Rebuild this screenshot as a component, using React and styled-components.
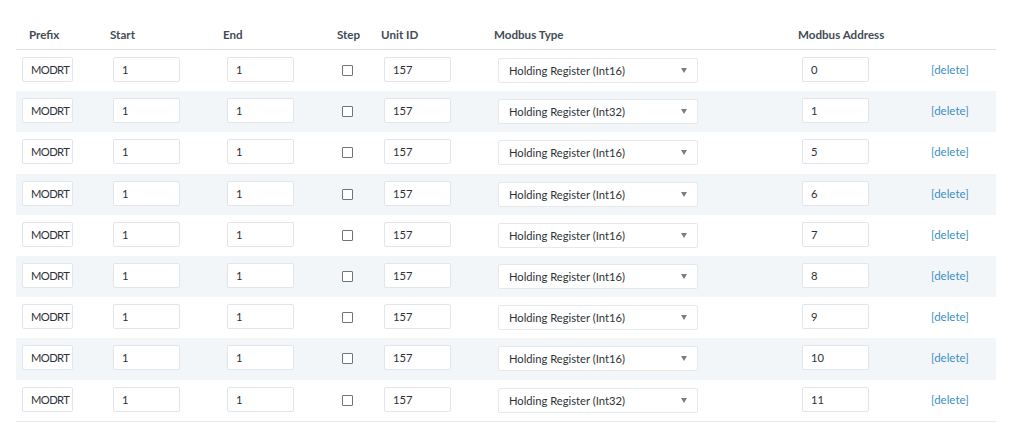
import React from "react";
import styled, { createGlobalStyle } from "styled-components";

const Global = createGlobalStyle`
  html, body { margin: 0; padding: 0; background: #fff; }
  body { font-family: "Lato", "Liberation Sans", sans-serif; }
  * { box-sizing: border-box; }
`;

const COLS = "90px 114px 114px 43px 114px 304px 129px 72px";

const Table = styled.div`
  width: 980px;
  margin-left: 16px;
  border-bottom: 1px solid #e6e9ed;
`;

const HeadRow = styled.div`
  display: grid;
  grid-template-columns: ${COLS};
  height: 50px;
  align-items: end;
  border-bottom: 1px solid #dde1e6;
  padding-bottom: 7px;
`;

const Th = styled.div`
  padding-left: ${(p) => p.$pl ?? 3}px;
  font-size: 11.6px;
  line-height: 15px;
  font-weight: 700;
  color: #434b56;
  white-space: nowrap;
`;

const Row = styled.div`
  display: grid;
  grid-template-columns: ${COLS};
  height: 41.2px;
  align-items: center;
  background: ${(p) => (p.$shaded ? "#f3f6f9" : "#fff")};
`;

const Td = styled.div`
  padding-left: ${(p) => p.$pl ?? 7}px;
  display: flex;
  align-items: center;
  padding-bottom: 2px;
`;

const Input = styled.div`
  width: ${(p) => p.$w}px;
  height: 25px;
  border: 1px solid #e2e5e9;
  border-radius: 2px;
  background: #fff;
  padding-left: ${(p) => p.$pad ?? 8}px;
  display: flex;
  align-items: center;
  font-size: 11.2px;
  letter-spacing: ${(p) => (p.$tight ? "-0.6px" : "0")};
  color: #2d3238;
`;

const Check = styled.span`
  width: 11px;
  height: 11px;
  border: 1px solid #6f7478;
  border-radius: 1px;
  background: #fff;
  margin-left: 1px;
  margin-top: 2px;
`;

const Select = styled.div`
  width: 200px;
  height: 25px;
  border: 1px solid #e6e9ec;
  border-radius: 2px;
  background: #fff;
  padding: 0 10px 0 10px;
  display: flex;
  align-items: center;
  justify-content: space-between;
  font-size: 11.2px;
  color: #2d3238;
  margin-top: 2px;
`;

const Caret = styled.span`
  width: 0;
  height: 0;
  border-left: 3.5px solid transparent;
  border-right: 3.5px solid transparent;
  border-top: 5px solid #7a7e83;
`;

const DeleteLink = styled.a`
  font-size: 11.5px;
  color: #3a8fc1;
  text-decoration: none;
  cursor: pointer;
`;

const addresses = [
  ["Int16", 0],
  ["Int32", 1],
  ["Int16", 5],
  ["Int16", 6],
  ["Int16", 7],
  ["Int16", 8],
  ["Int16", 9],
  ["Int16", 10],
  ["Int32", 11],
];

export default function App() {
  return (
    <>
      <Global />
      <Table>
        <HeadRow>
          <Th $pl={13}>Prefix</Th>
          <Th $pl={4}>Start</Th>
          <Th $pl={3}>End</Th>
          <Th $pl={3}>Step</Th>
          <Th $pl={4}>Unit ID</Th>
          <Th $pl={3}>Modbus Type</Th>
          <Th $pl={3}>Modbus Address</Th>
          <Th />
        </HeadRow>
        {addresses.map(([type, addr], i) => (
          <Row key={i} $shaded={i % 2 === 1}>
            <Td $pl={6}>
              <Input $w={51} $pad={8} $tight>MODRT</Input>
            </Td>
            <Td>
              <Input $w={67}>1</Input>
            </Td>
            <Td>
              <Input $w={67}>1</Input>
            </Td>
            <Td $pl={7}>
              <Check />
            </Td>
            <Td>
              <Input $w={67}>157</Input>
            </Td>
            <Td>
              <Select>
                <span>Holding Register ({type})</span>
                <Caret />
              </Select>
            </Td>
            <Td>
              <Input $w={67}>{addr}</Input>
            </Td>
            <Td>
              <DeleteLink>[delete]</DeleteLink>
            </Td>
          </Row>
        ))}
      </Table>
    </>
  );
}
